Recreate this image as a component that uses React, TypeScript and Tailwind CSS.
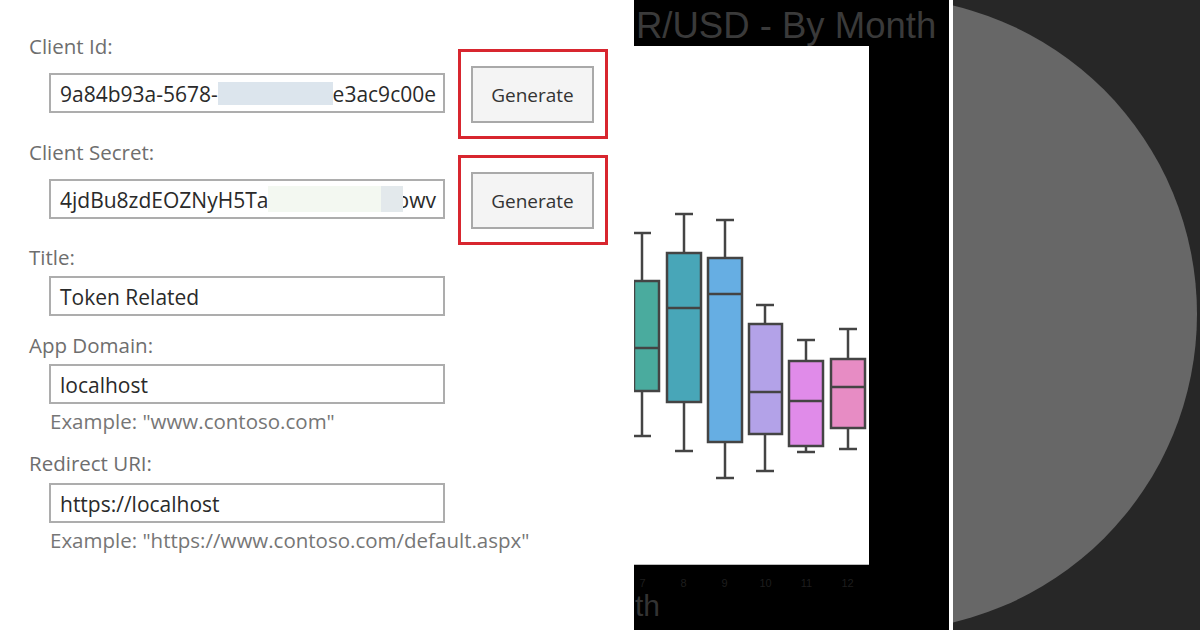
import React from 'react';

const boxes = [
  { x: 0, w: 25, cx: 8, capTop: 187, top: 235, med: 302, bottom: 345, capBottom: 390, fill: '#4aab9e' },
  { x: 33, w: 34, cx: 50, capTop: 168, top: 207, med: 262, bottom: 356, capBottom: 405, fill: '#48a6b8' },
  { x: 74, w: 34, cx: 91, capTop: 174, top: 212, med: 248, bottom: 396, capBottom: 432, fill: '#66aee3' },
  { x: 115, w: 33, cx: 131, capTop: 259, top: 278, med: 346, bottom: 388, capBottom: 425, fill: '#b3a2e8' },
  { x: 155, w: 34, cx: 172, capTop: 294, top: 315, med: 355, bottom: 400, capBottom: 406, fill: '#e08be9' },
  { x: 197, w: 34, cx: 214, capTop: 283, top: 313, med: 341, bottom: 382, capBottom: 403, fill: '#e78cc4' },
];

const months = ['7', '8', '9', '10', '11', '12'];

const Label = ({ children, className = '' }: { children: React.ReactNode; className?: string }) => (
  <div className={`pl-[29px] text-[20.5px] leading-[28px] text-[#6e6e6e] ${className}`}>{children}</div>
);

const Hint = ({ children, className = '' }: { children: React.ReactNode; className?: string }) => (
  <div className={`pl-[50px] text-[20.5px] leading-[28px] text-[#767676] ${className}`}>{children}</div>
);

const Field = ({ children, className = '' }: { children: React.ReactNode; className?: string }) => (
  <div
    className={`ml-[49px] flex h-[40px] w-[396px] items-center overflow-hidden border-2 border-[#adadad] bg-white pl-[9px] pr-[7px] pt-[3px] text-[21px] text-[#2a2a2a] ${className}`}
  >
    {children}
  </div>
);

const GenerateButton = () => (
  <div className="ml-[13px] -mt-[17px] border-[3px] border-[#d8262f] pb-[13px] pl-[10px] pr-[11px] pt-[14px]">
    <button className="flex h-[57px] w-[123px] items-center justify-center border-2 border-[#a9a9a9] bg-[#f4f4f4] pt-[2px] text-[19px] text-[#333]">
      Generate
    </button>
  </div>
);

const FormPanel = () => (
  <div className="w-[634px] shrink-0 bg-white pt-[32px]" style={{ fontFamily: '"Open Sans", "Noto Sans", sans-serif' }}>
    <Label>Client Id:</Label>
    <div className="mt-[6px] flex h-[57px] items-start">
      <Field className="mt-[7px]">
        <span className="whitespace-nowrap">9a84b93a-5678-</span>
        <span className="-mt-[3px] h-[23px] flex-1 bg-[#dce5ed]" />
        <span className="whitespace-nowrap">e3ac9c00e</span>
      </Field>
      <GenerateButton />
    </div>

    <Label className="mt-[15px]">Client Secret:</Label>
    <div className="mt-[6px] flex h-[57px] items-start">
      <Field className="mt-[7px]">
        <span className="whitespace-nowrap">4jdBu8zdEOZNyH5Ta</span>
        <span className="-mt-[3px] h-[26px] flex-1 bg-[#f3f8f1]" />
        <span className="relative z-10 -mt-[3px] h-[26px] w-[22px] bg-[#e3e9ec]" />
        <span className="-ml-[6px] whitespace-nowrap">owv</span>
      </Field>
      <GenerateButton />
    </div>

    <Label className="mt-[14px]">Title:</Label>
    <Field className="mt-[5px]">Token Related</Field>

    <Label className="mt-[15px]">App Domain:</Label>
    <Field className="mt-[5px]">localhost</Field>
    <Hint className="mt-[3px]">Example: "www.contoso.com"</Hint>

    <Label className="mt-[14px]">Redirect URI:</Label>
    <Field className="mt-[6px]">https://localhost</Field>
    <Hint className="mt-[3px]">Example: "https://www.contoso.com/default.aspx"</Hint>
  </div>
);

const ChartPanel = () => (
  <div
    className="flex w-[315px] shrink-0 flex-col overflow-hidden bg-black"
    style={{ fontFamily: '"Liberation Sans", Arial, sans-serif' }}
  >
    <div className="h-[46px] whitespace-nowrap pl-[2px] pt-[8px] text-[36.5px] leading-[35px] text-[#3a3a3a]">R/USD - By Month</div>
    <div className="h-[519px] w-[235px] border-b border-[#bdbdbd] bg-white">
      <svg width="235" height="518" viewBox="0 0 235 518">
        {boxes.map((b) => (
          <g key={b.cx} stroke="#444" strokeWidth="2.5" fill="none">
            <line x1={b.cx} y1={b.capTop} x2={b.cx} y2={b.top} />
            <line x1={b.cx} y1={b.bottom} x2={b.cx} y2={b.capBottom} />
            <line x1={b.cx - 9} y1={b.capTop} x2={b.cx + 9} y2={b.capTop} />
            <line x1={b.cx - 9} y1={b.capBottom} x2={b.cx + 9} y2={b.capBottom} />
            <rect x={b.x} y={b.top} width={b.w} height={b.bottom - b.top} fill={b.fill} />
            <line x1={b.x} y1={b.med} x2={b.x + b.w} y2={b.med} />
          </g>
        ))}
      </svg>
    </div>
    <div className="-ml-[12px] mt-[10px] flex text-[11px] leading-[16px] text-[#1e1e1e]">
      {months.map((m) => (
        <span key={m} className="w-[41px] text-center">
          {m}
        </span>
      ))}
    </div>
    <div className="pl-[1px] text-[30px] leading-[30px] text-[#333]">th</div>
  </div>
);

const ShapePanel = () => (
  <div className="flex-1 overflow-hidden bg-[#272727]">
    <svg width="247" height="630" viewBox="0 0 247 630">
      <circle cx="-73" cy="314" r="317" fill="#676767" />
    </svg>
  </div>
);

export default function App() {
  return (
    <div className="flex h-[630px] w-[1200px] overflow-hidden bg-white">
      <FormPanel />
      <ChartPanel />
      <div className="w-[4px] shrink-0 bg-white" />
      <ShapePanel />
    </div>
  );
}
